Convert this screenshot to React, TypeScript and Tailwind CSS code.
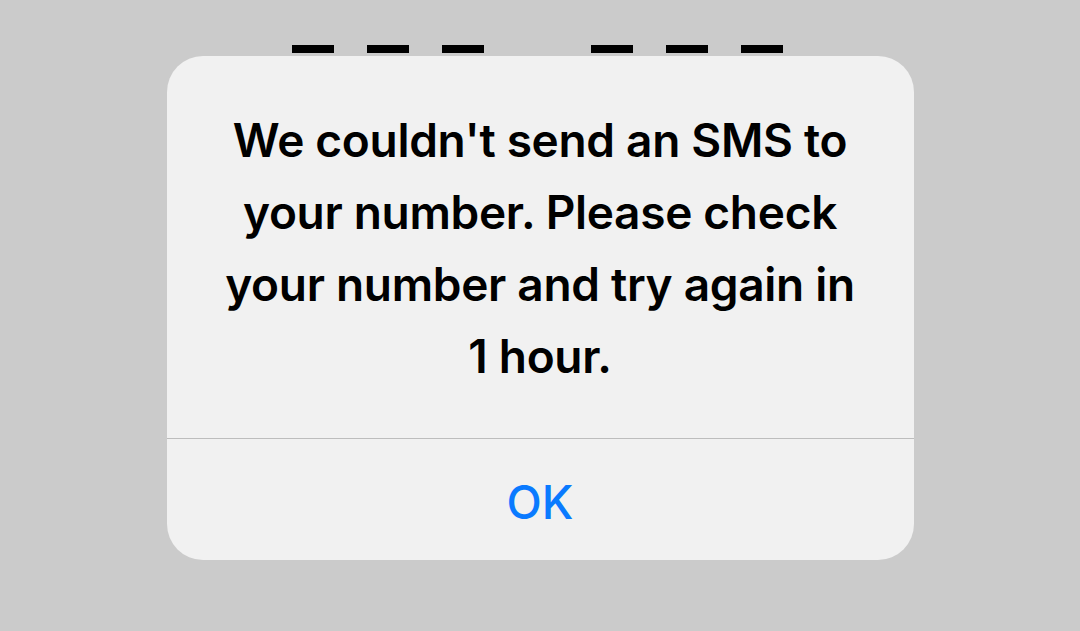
export default function App() {
  const dashes = [0, 1, 2]
  return (
    <div className="flex h-screen w-full flex-col items-center bg-[#cbcbcb] pt-[45px] font-['Inter','Noto_Sans',sans-serif]">
      {/* passcode dashes behind the alert */}
      <div className="flex h-[8px] w-full justify-center gap-[107px] pr-[5px]">
        {[0, 1].map((g) => (
          <div key={g} className="flex gap-[33px]">
            {dashes.map((d) => (
              <div key={d} className="h-[8px] w-[42px] bg-black" />
            ))}
          </div>
        ))}
      </div>

      <div className="mt-[3px] flex w-[747px] flex-col overflow-hidden rounded-[36px] bg-[#f1f1f1]">
        <div className="flex flex-col items-center px-8 pb-[46px] pt-[48px] text-center text-[46px] font-semibold leading-[72px] tracking-[-0.3px] text-black">
          <span>We couldn't send an SMS to</span>
          <span>your number. Please check</span>
          <span>your number and try again in</span>
          <span>1 hour.</span>
        </div>
        <div className="h-px bg-[#bdbdbd]" />
        <button className="flex h-[121px] items-center justify-center pt-[6px] text-[46px] font-medium text-[#0a7aff]">
          OK
        </button>
      </div>
    </div>
  )
}
